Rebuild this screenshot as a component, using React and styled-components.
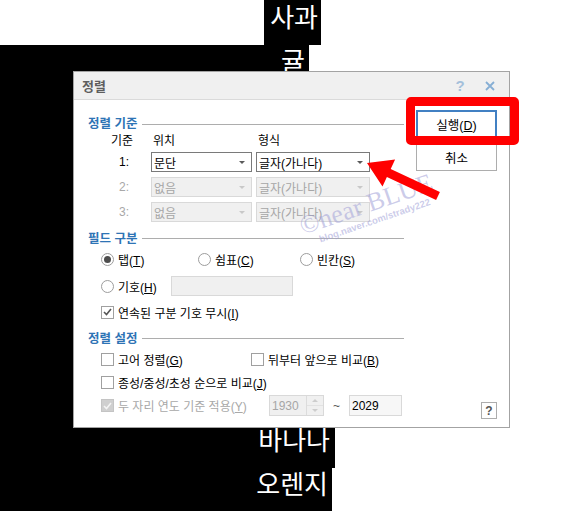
import React from 'react';
import styled, { createGlobalStyle } from 'styled-components';

const GlobalStyle = createGlobalStyle`
  html, body {
    margin: 0;
    padding: 0;
    background: #fff;
  }
`;

// Latin glyphs (mnemonics, brackets, digits) from Liberation Sans, Hangul from Noto CJK
const UI_FONT = '"Liberation Sans", "Noto Sans CJK KR", sans-serif';

const Sheet = styled.div`
  position: relative;
  width: 561px;
  height: 527px;
  overflow: hidden;
  background: #fff;
  font-family: ${UI_FONT};
`;

const Cell = styled.div`
  box-sizing: border-box;
  width: ${({ $w }) => $w}px;
  height: ${({ $h }) => $h}px;
  margin-left: ${({ $left }) => $left || 0}px;
  padding-right: ${({ $pad }) => $pad || 0}px;
  padding-top: ${({ $top }) => $top || 0}px;
  background: #000;
  color: #fff;
  font-family: "Noto Sans CJK KR", sans-serif;
  font-size: 26px;
  line-height: 30px;
  text-align: right;
  white-space: nowrap;
`;

const Dialog = styled.div`
  position: absolute;
  left: 73px;
  top: 71px;
  width: 437px;
  height: 357px;
  box-sizing: border-box;
  display: flex;
  flex-direction: column;
  border: 1px solid #a3a3a3;
  background: #fff;
  font-size: 12px;
  color: #000;
`;

const TitleBar = styled.div`
  display: flex;
  align-items: center;
  height: 28px;
  box-sizing: border-box;
  padding: 0 14px 0 8px;
  background: #f0f0f0;
  border-bottom: 1px solid #dadada;
`;

const Title = styled.div`
  flex: 1;
  font-size: 13px;
  font-weight: 700;
  color: #5e5e5e;
`;

const TitleHelp = styled.span`
  width: 12px;
  margin-right: 19px;
  text-align: center;
  font: 700 15px "Liberation Sans", sans-serif;
  color: #a5c0db;
`;

const Body = styled.div`
  flex: 1;
  display: flex;
  gap: 12px;
  padding: 10px 12px 8px 14px;
`;

const Main = styled.div`
  width: 316px;
  padding-top: 4px;
  display: flex;
  flex-direction: column;
`;

const GroupHead = styled.div`
  display: flex;
  align-items: center;
  gap: 5px;
  height: ${({ $h }) => $h || 16}px;
  margin-top: ${({ $mt }) => $mt || 0}px;
  color: #2e74b5;
  font-size: 12.5px;
  font-weight: 700;
  white-space: nowrap;
`;

const Rule = styled.div`
  flex: 1;
  height: 1px;
  margin-top: 3px;
  background: #adadad;
`;

const KeyGrid = styled.div`
  display: grid;
  grid-template-columns: 59px 101px 114px;
  grid-template-rows: 16px 20px 20px 20px;
  column-gap: 4px;
  row-gap: 5px;
  align-items: center;
`;

const KeyLabel = styled.div`
  text-align: right;
  padding-right: ${({ $pad }) => $pad}px;
  color: ${({ $dim }) => ($dim ? '#a8a8a8' : '#000')};
`;

const ColHead = styled.div`
  padding-left: 2px;
`;

const Select = styled.div`
  display: flex;
  align-items: center;
  justify-content: space-between;
  height: 20px;
  box-sizing: border-box;
  padding: 0 6px 0 2px;
  border: 1px solid ${({ $disabled }) => ($disabled ? '#d9d9d9' : '#7a7a7a')};
  background: ${({ $disabled }) => ($disabled ? '#f0f0f0' : '#fff')};
  color: ${({ $disabled }) => ($disabled ? '#a6a6a6' : '#000')};
  white-space: nowrap;
`;

const Caret = styled.span`
  width: 0;
  height: 0;
  border-left: 3px solid transparent;
  border-right: 3px solid transparent;
  border-top: 3px solid ${({ $disabled }) => ($disabled ? '#c8c8c8' : '#5a5a5a')};
`;

const OptionRow = styled.div`
  display: ${({ $cols }) => ($cols ? 'grid' : 'flex')};
  grid-template-columns: ${({ $cols }) => $cols || 'none'};
  align-items: center;
  height: ${({ $h }) => $h || 18}px;
  margin-top: ${({ $mt }) => $mt || 0}px;
  padding-left: 13px;
`;

const Option = styled.label`
  display: flex;
  align-items: center;
  gap: 4px;
  width: ${({ $w }) => ($w ? `${$w}px` : 'auto')};
  color: ${({ $dim }) => ($dim ? '#a8a8a8' : '#000')};
  white-space: nowrap;
`;

const Caption = styled.span`
  white-space: nowrap;
`;

const Radio = styled.span`
  width: 13px;
  height: 13px;
  box-sizing: border-box;
  border-radius: 50%;
  border: 1px solid #9d9d9d;
  background: #fff;
  display: flex;
  align-items: center;
  justify-content: center;

  &::after {
    content: '';
    display: ${({ $on }) => ($on ? 'block' : 'none')};
    width: 7px;
    height: 7px;
    border-radius: 50%;
    background: #4d4d4d;
  }
`;

const Box = styled.span`
  width: 13px;
  height: 13px;
  box-sizing: border-box;
  border: 1px solid ${({ $dim }) => ($dim ? '#c4c4c4' : '#a0a0a0')};
  background: ${({ $dim }) => ($dim ? '#cfcfcf' : '#fff')};
  display: flex;
  align-items: center;
  justify-content: center;
`;

const Field = styled.div`
  display: flex;
  align-items: center;
  width: ${({ $w }) => $w}px;
  height: ${({ $h }) => $h || 20}px;
  box-sizing: border-box;
  padding-left: 2px;
  border: 1px solid #d9d9d9;
  background: ${({ $bg }) => $bg || '#f0f0f0'};
  color: #000;
  font-size: 12px;
`;

const Spin = styled.div`
  display: flex;
  width: 55px;
  height: 21px;
  box-sizing: border-box;
  border: 1px solid #d9d9d9;
  background: #f0f0f0;
`;

const SpinText = styled.div`
  flex: 1;
  display: flex;
  align-items: center;
  padding-left: 2px;
  color: #a6a6a6;
`;

const SpinButtons = styled.div`
  width: 16px;
  display: flex;
  flex-direction: column;
  border-left: 1px solid #dcdcdc;
`;

const SpinArrow = styled.div`
  flex: 1;
  display: flex;
  align-items: center;
  justify-content: center;
  border-top: ${({ $down }) => ($down ? '1px solid #e2e2e2' : 'none')};

  &::after {
    content: '';
    border-left: 3px solid transparent;
    border-right: 3px solid transparent;
    ${({ $down }) => ($down ? 'border-top' : 'border-bottom')}: 3px solid #cdcdcd;
  }
`;

const Tilde = styled.span`
  width: 25px;
  text-align: center;
  color: #555;
`;

const Side = styled.div`
  width: 81px;
  display: flex;
  flex-direction: column;
  gap: 5px;
`;

const Button = styled.div`
  height: 28px;
  box-sizing: border-box;
  display: flex;
  align-items: center;
  justify-content: center;
  border: ${({ $primary }) => ($primary ? '2px solid #4180c3' : '1px solid #adadad')};
  background: #fff;
  font-size: 12.5px;
`;

const HelpButton = styled.div`
  margin-top: auto;
  align-self: flex-end;
  width: 16px;
  height: 17px;
  box-sizing: border-box;
  border: 1px solid #adadad;
  display: flex;
  align-items: center;
  justify-content: center;
  font-size: 12px;
  font-weight: 700;
  color: #555;
`;

const Highlight = styled.div`
  position: absolute;
  left: 406px;
  top: 97px;
  width: 113px;
  height: 48px;
  box-sizing: border-box;
  border: 9px solid #ff0000;
  border-radius: 5px;
  pointer-events: none;
`;

const ArrowSvg = styled.svg`
  position: absolute;
  left: 360px;
  top: 150px;
  pointer-events: none;
`;

const Watermark = styled.div`
  position: absolute;
  left: 308px;
  top: 213px;
  transform-origin: 0 100%;
  transform: rotate(-19deg);
  color: rgba(160, 160, 215, 0.55);
  pointer-events: none;
  white-space: nowrap;
`;

const MarkTitle = styled.div`
  font: 26px/26px "Liberation Serif", serif;
`;

const MarkUrl = styled.div`
  padding-left: 14px;
  font: 700 9.5px/10px "Liberation Sans", sans-serif;
`;

const Check = ({ color }) => (
  <svg width="9" height="8" viewBox="0 0 9 8">
    <path d="M1 4 L3.5 6.5 L8 1" fill="none" stroke={color} strokeWidth="1.6" />
  </svg>
);

const CloseIcon = () => (
  <svg width="10" height="10" viewBox="0 0 10 10">
    <path d="M1 1 L9 9 M9 1 L1 9" stroke="#86aed4" strokeWidth="1.8" />
  </svg>
);

const keys = [
  { n: '1:', a: '문단', b: '글자(가나다)' },
  { n: '2:', a: '없음', b: '글자(가나다)', off: true },
  { n: '3:', a: '없음', b: '글자(가나다)', off: true },
];

const App = () => (
  <>
    <GlobalStyle />
    <Sheet>
      <Cell $left={264} $w={57} $h={45} $pad={3} $top={1}>사과</Cell>
      <Cell $w={309} $h={45} $pad={4}>귤</Cell>
      <Cell $w={335} $h={334} />
      <Cell $w={335} $h={44} $pad={5}>바나나</Cell>
      <Cell $w={332} $h={43} $pad={4}>오렌지</Cell>

      <Dialog>
        <TitleBar>
          <Title>정렬</Title>
          <TitleHelp>?</TitleHelp>
          <CloseIcon />
        </TitleBar>
        <Body>
          <Main>
            <GroupHead $h={17}>
              정렬 기준<Rule />
            </GroupHead>
            <KeyGrid>
              <KeyLabel $pad={14}>기준</KeyLabel>
              <ColHead>위치</ColHead>
              <ColHead>형식</ColHead>
              {keys.map((k) => (
                <React.Fragment key={k.n}>
                  <KeyLabel $pad={18} $dim={k.off}>{k.n}</KeyLabel>
                  <Select $disabled={k.off}>
                    {k.a}
                    <Caret $disabled={k.off} />
                  </Select>
                  <Select $disabled={k.off}>
                    {k.b}
                    <Caret $disabled={k.off} />
                  </Select>
                </React.Fragment>
              ))}
            </KeyGrid>

            <GroupHead $mt={7}>
              필드 구분<Rule />
            </GroupHead>
            <OptionRow $mt={5} $cols="97px 102px auto">
              <Option><Radio $on /><Caption>탭(<u>T</u>)</Caption></Option>
              <Option><Radio /><Caption>쉼표(<u>C</u>)</Caption></Option>
              <Option><Radio /><Caption>빈칸(<u>S</u>)</Caption></Option>
            </OptionRow>
            <OptionRow $mt={8} $h={20}>
              <Option $w={70}><Radio /><Caption>기호(<u>H</u>)</Caption></Option>
              <Field $w={122} />
            </OptionRow>
            <OptionRow $mt={7}>
              <Option>
                <Box><Check color="#555" /></Box>
                <Caption>연속된 구분 기호 무시(<u>I</u>)</Caption>
              </Option>
            </OptionRow>

            <GroupHead $mt={8}>
              정렬 설정<Rule />
            </GroupHead>
            <OptionRow $mt={5} $cols="150px auto">
              <Option><Box /><Caption>고어 정렬(<u>G</u>)</Caption></Option>
              <Option><Box /><Caption>뒤부터 앞으로 비교(<u>B</u>)</Caption></Option>
            </OptionRow>
            <OptionRow $mt={5}>
              <Option><Box /><Caption>종성/중성/초성 순으로 비교(<u>J</u>)</Caption></Option>
            </OptionRow>
            <OptionRow $mt={4} $h={21}>
              <Option $w={168} $dim>
                <Box $dim><Check color="#f4f4f4" /></Box>
                <Caption>두 자리 연도 기준 적용(<u>Y</u>)</Caption>
              </Option>
              <Spin>
                <SpinText>1930</SpinText>
                <SpinButtons>
                  <SpinArrow />
                  <SpinArrow $down />
                </SpinButtons>
              </Spin>
              <Tilde>~</Tilde>
              <Field $w={53} $h={21} $bg="#f7f7f7">2029</Field>
            </OptionRow>
          </Main>

          <Side>
            <Button $primary><Caption>실행(<u>D</u>)</Caption></Button>
            <Button>취소</Button>
            <HelpButton>?</HelpButton>
          </Side>
        </Body>
      </Dialog>

      <Watermark>
        <MarkTitle>©near BLUE</MarkTitle>
        <MarkUrl>blog.naver.com/strady222</MarkUrl>
      </Watermark>

      <Highlight />

      <ArrowSvg width="90" height="60" viewBox="360 150 90 60">
        <polygon
          points="367,163 395.1,159.4 390.7,168.9 439.9,191.9 436.1,200.1 386.9,177.1 382.5,186.6"
          fill="#ff0000"
        />
      </ArrowSvg>
    </Sheet>
  </>
);

export default App;
